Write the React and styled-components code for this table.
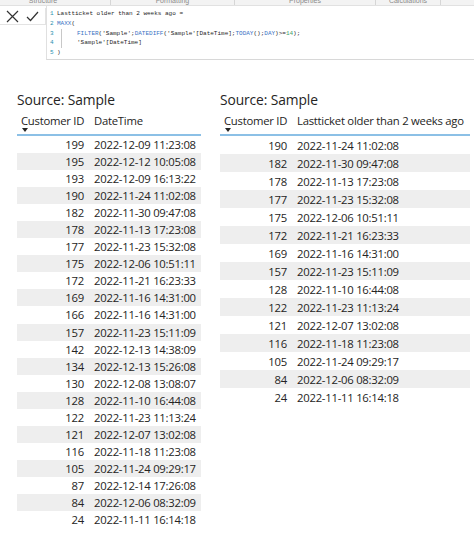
import styled, { createGlobalStyle } from 'styled-components';

const leftRows = [
  [199, '2022-12-09 11:23:08'],
  [195, '2022-12-12 10:05:08'],
  [193, '2022-12-09 16:13:22'],
  [190, '2022-11-24 11:02:08'],
  [182, '2022-11-30 09:47:08'],
  [178, '2022-11-13 17:23:08'],
  [177, '2022-11-23 15:32:08'],
  [175, '2022-12-06 10:51:11'],
  [172, '2022-11-21 16:23:33'],
  [169, '2022-11-16 14:31:00'],
  [166, '2022-11-16 14:31:00'],
  [157, '2022-11-23 15:11:09'],
  [142, '2022-12-13 14:38:09'],
  [134, '2022-12-13 15:26:08'],
  [130, '2022-12-08 13:08:07'],
  [128, '2022-11-10 16:44:08'],
  [122, '2022-11-23 11:13:24'],
  [121, '2022-12-07 13:02:08'],
  [116, '2022-11-18 11:23:08'],
  [105, '2022-11-24 09:29:17'],
  [87, '2022-12-14 17:26:08'],
  [84, '2022-12-06 08:32:09'],
  [24, '2022-11-11 16:14:18'],
];

const rightRows = [
  [190, '2022-11-24 11:02:08'],
  [182, '2022-11-30 09:47:08'],
  [178, '2022-11-13 17:23:08'],
  [177, '2022-11-23 15:32:08'],
  [175, '2022-12-06 10:51:11'],
  [172, '2022-11-21 16:23:33'],
  [169, '2022-11-16 14:31:00'],
  [157, '2022-11-23 15:11:09'],
  [128, '2022-11-10 16:44:08'],
  [122, '2022-11-23 11:13:24'],
  [121, '2022-12-07 13:02:08'],
  [116, '2022-11-18 11:23:08'],
  [105, '2022-11-24 09:29:17'],
  [84, '2022-12-06 08:32:09'],
  [24, '2022-11-11 16:14:18'],
];

// ribbon tabs, mostly scrolled out of view at the top
const tabs = [
  ['Structure', 134],
  ['Formatting', 123],
  ['Properties', 140],
  ['Calculations', 64],
];

const Table = ({ width, idWidth, label, rows, rowHeight }) => (
  <TableWrap $width={width}>
    <Title>Source: Sample</Title>
    <HeaderRow>
      <HeadCell $width={idWidth} $pad={4}>
        Customer ID
        <SortCaret />
      </HeadCell>
      <HeadCell $pad={6}>{label}</HeadCell>
    </HeaderRow>
    {rows.map(([id, date], i) => (
      <Row key={id} $shaded={i % 2 === 1} $height={rowHeight}>
        <IdCell $width={idWidth}>{id}</IdCell>
        <DateCell>{date}</DateCell>
      </Row>
    ))}
  </TableWrap>
);

const App = () => (
  <>
    <GlobalStyle />
    <TabStrip>
      {tabs.map(([name, w]) => (
        <Tab key={name} $width={w}>
          {name}
        </Tab>
      ))}
    </TabStrip>
    <FormulaBar>
      <IconBox>
        <svg width="13" height="13" viewBox="0 0 13 13">
          <path d="M1 1 L12 12 M12 1 L1 12" stroke="#333" strokeWidth="1.2" fill="none" />
        </svg>
        <svg width="13" height="13" viewBox="0 0 13 13">
          <path d="M1 7 L4.5 10.5 L12 2" stroke="#333" strokeWidth="1.2" fill="none" />
        </svg>
      </IconBox>
      <Editor>
        <Line>
          <Num>1</Num>Lastticket older than 2 weeks ago =
        </Line>
        <Line>
          <Num>2</Num>
          <Fn>MAXX</Fn>(
        </Line>
        <Line>
          <Num>3</Num>
          <Indent />
          <Fn>FILTER</Fn>('Sample';<Fn>DATEDIFF</Fn>('Sample'[DateTime];<Fn>TODAY</Fn>();
          <Fn>DAY</Fn>)&gt;=<NumLit>14</NumLit>);
        </Line>
        <Line>
          <Num>4</Num>
          <Indent />
          'Sample'[DateTime]
        </Line>
        <Line>
          <Num>5</Num>)
        </Line>
      </Editor>
    </FormulaBar>
    <Tables>
      <Table width={184} idWidth={71} label="DateTime" rows={leftRows} rowHeight={17.05} />
      <Table
        width={250}
        idWidth={71}
        label="Lastticket older than 2 weeks ago"
        rows={rightRows}
        rowHeight={18}
      />
    </Tables>
  </>
);

const GlobalStyle = createGlobalStyle`
  body {
    margin: 0;
    background: #ffffff;
    font-family: "Open Sans", "Noto Sans", sans-serif;
    color: #252423;
    overflow: hidden;
  }
`;

const TabStrip = styled.div`
  display: flex;
  height: 5px;
  margin-left: -24px;
  overflow: hidden;
  background: #f3f3f3;
  border-bottom: 1px solid #e1e1e1;
`;

const Tab = styled.div`
  flex-shrink: 0;
  width: ${(p) => p.$width}px;
  border-right: 1px solid #d6d6d6;
  font-size: 7px;
  line-height: 2px;
  color: #8a8a8a;
  text-align: center;
  font-family: "Liberation Sans", sans-serif;
`;

const FormulaBar = styled.div`
  display: flex;
  align-items: flex-start;
`;

const IconBox = styled.div`
  width: 46px;
  height: 17px;
  display: flex;
  align-items: center;
  justify-content: space-around;
  padding: 0 3px;
  box-sizing: border-box;
  border-right: 1px solid #e3e3e3;
  border-bottom: 1px solid #e3e3e3;
  margin-top: 2px;
`;

const Editor = styled.div`
  flex: 1;
  height: 54px;
  padding: 3px 0 0 3px;
  box-sizing: border-box;
  border-left: 1px solid #e0e0e0;
  border-bottom: 1px solid #d8d8d8;
  font-family: "Liberation Mono", monospace;
  font-size: 6px;
  line-height: 9.8px;
  color: #1e1e1e;
`;

const Line = styled.div`
  display: flex;
  white-space: pre;
`;

const Num = styled.span`
  width: 7px;
  color: #2b91af;
`;

const Indent = styled.span`
  width: 15px;
  margin-left: 4px;
  border-left: 1px solid #c8c8c8;
`;

const Fn = styled.span`
  color: #3a72c4;
`;

const NumLit = styled.span`
  color: #3fa06a;
`;

const Tables = styled.div`
  display: flex;
  align-items: flex-start;
  gap: 19px;
  padding: 30px 0 0 17px;
`;

const TableWrap = styled.div`
  width: ${(p) => p.$width}px;
  flex-shrink: 0;
`;

const Title = styled.div`
  font-size: 13.8px;
  line-height: 20px;
  letter-spacing: -0.1px;
  color: #252423;
  white-space: nowrap;
`;

const HeaderRow = styled.div`
  display: flex;
  height: 22px;
  padding-top: 2px;
  border-bottom: 2px solid #8cc0e6;
  font-size: 11.3px;
  letter-spacing: -0.25px;
  white-space: nowrap;
`;

const HeadCell = styled.div`
  position: relative;
  flex-shrink: 0;
  box-sizing: border-box;
  width: ${(p) => (p.$width ? `${p.$width}px` : 'auto')};
  padding-left: ${(p) => p.$pad}px;
  line-height: 17px;
`;

const SortCaret = styled.span`
  position: absolute;
  left: 5px;
  top: 16px;
  border-left: 3.5px solid transparent;
  border-right: 3.5px solid transparent;
  border-top: 4px solid #252423;
`;

const Row = styled.div`
  display: flex;
  height: ${(p) => p.$height}px;
  align-items: center;
  background: ${(p) => (p.$shaded ? '#eeeeee' : 'transparent')};
  font-size: 11.3px;
  letter-spacing: -0.25px;
  white-space: nowrap;
`;

const IdCell = styled.div`
  flex-shrink: 0;
  width: ${(p) => p.$width}px;
  box-sizing: border-box;
  padding-right: 4px;
  text-align: right;
`;

const DateCell = styled.div`
  padding-left: 6px;
`;

export default App;
